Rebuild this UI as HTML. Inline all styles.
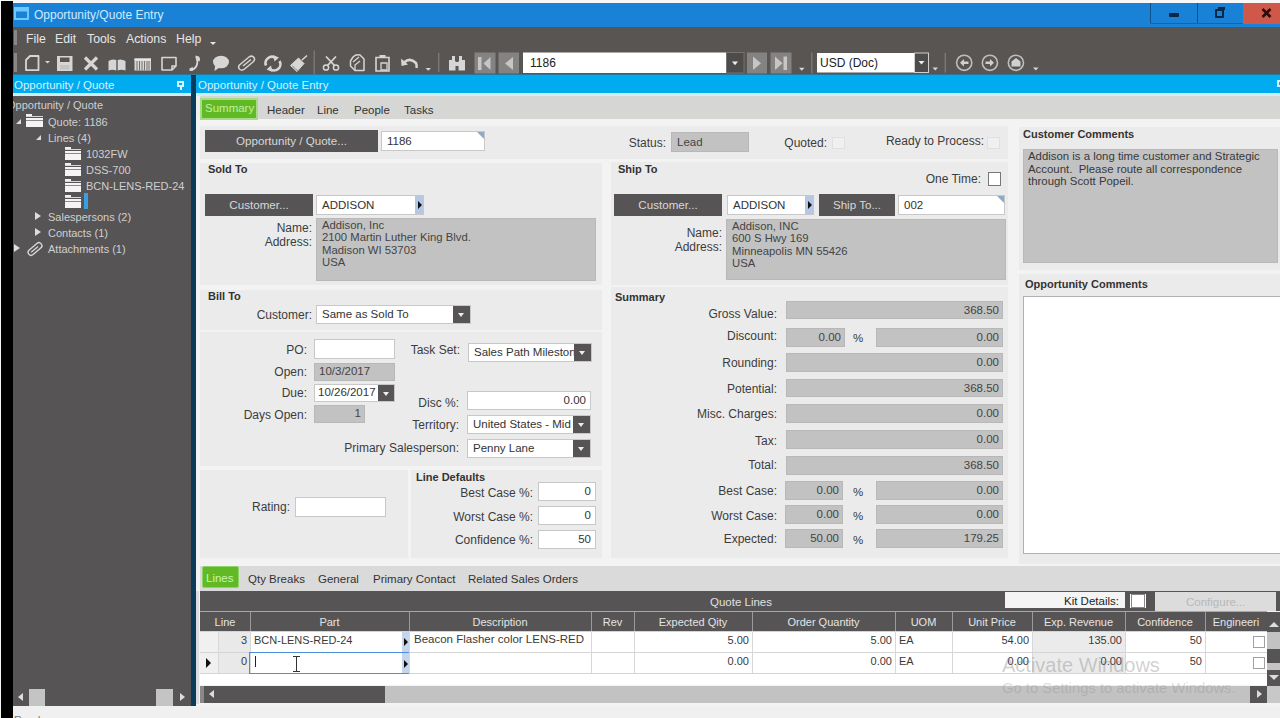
<!DOCTYPE html>
<html><head><meta charset="utf-8">
<style>
*{box-sizing:border-box;margin:0;padding:0}
html,body{width:1280px;height:718px;overflow:hidden}
body{position:relative;background:#f3f3f4;font-family:"Liberation Sans",sans-serif;font-size:12px;color:#3a3a3a}
.a{position:absolute}
.t{position:absolute;white-space:nowrap;line-height:14px}
.lbl{position:absolute;white-space:nowrap;line-height:14px;text-align:right;color:#3c3c3c;font-size:12px}
.grp{position:absolute;background:#ebebeb}
.gt{position:absolute;font-weight:bold;font-size:11px;color:#333;white-space:nowrap}
.btn{position:absolute;background:#575455;color:#d8d8d8;text-align:center;font-size:11.6px;line-height:22px;white-space:nowrap}
.fld{position:absolute;background:#fff;border:1px solid #c8c8c8;font-size:11.5px;line-height:17px;padding-left:5px;white-space:nowrap;overflow:hidden;color:#333}
.ro{position:absolute;background:#c2c2c2;border:1px solid #b8b8b8;font-size:11.5px;line-height:17px;padding:0 3px 0 5px;white-space:nowrap;overflow:hidden;color:#444}
.r{text-align:right}
.dd{position:absolute;right:0;top:0;bottom:0;width:17px;background:#575455}
.dd:after{content:"";position:absolute;left:5px;top:7px;border-left:3.5px solid transparent;border-right:3.5px solid transparent;border-top:4px solid #eee}
.cb{position:absolute;background:#fff;border:1px solid #9a9a9a}
</style></head><body>
<!-- frame -->
<div class="a" style="left:0;top:0;width:1280px;height:3px;background:#f8f8f8"></div>
<div class="a" style="left:1px;top:1px;width:12px;height:717px;background:#000"></div>
<div class="a" style="left:13px;top:3px;width:1267px;height:24px;background:#1a82d6"></div>
<div class="a" style="left:13px;top:27px;width:1267px;height:48px;background:#595553"></div>
<div class="a" style="left:13px;top:74px;width:1267px;height:1px;background:#2f7595"></div>
<!-- left panel -->
<div class="a" style="left:13px;top:75px;width:178px;height:18px;background:#00acef"></div>
<div class="a" style="left:13px;top:93px;width:178px;height:3px;background:#d0edf7"></div>
<div class="a" style="left:13px;top:96px;width:178px;height:610px;background:#575455"></div>
<div class="a" style="left:191px;top:75px;width:5px;height:631px;background:#0b3b5a"></div>
<!-- main header -->
<div class="a" style="left:196px;top:75px;width:1084px;height:18px;background:#00acef"></div>
<div class="a" style="left:196px;top:93px;width:1084px;height:3px;background:#d0edf7"></div>
<div class="a" style="left:196px;top:96px;width:1084px;height:23px;background:#d6d7d4"></div><div class="a" style="left:196px;top:96px;width:4px;height:23px;background:#eef0ee"></div>
<div class="a" style="left:1277px;top:80px;width:4px;height:7px;border:2px solid #d4f2ff;border-right:none"></div>
<div class="a" style="left:196px;top:119px;width:1084px;height:446px;background:#f3f3f4"></div>
<!-- status bar -->
<div class="a" style="left:13px;top:706px;width:1267px;height:12px;background:#f0f0f0"></div>

<!-- tabs -->
<div class="a" style="left:200px;top:98px;width:58px;height:22px;background:#62b926;border:2px solid #a6dc86"></div>
<div class="t" style="left:205px;top:101px;color:#c0f0a4;font-size:11.5px">Summary</div>
<div class="t" style="left:267px;top:103px;color:#333;font-size:11.5px">Header</div>
<div class="t" style="left:317px;top:103px;color:#333;font-size:11.5px">Line</div>
<div class="t" style="left:354px;top:103px;color:#333;font-size:11.5px">People</div>
<div class="t" style="left:404px;top:103px;color:#333;font-size:11.5px">Tasks</div>
<!-- groups -->
<div class="grp" style="left:200px;top:126px;width:808px;height:33px"></div>
<div class="grp" style="left:200px;top:163px;width:402px;height:122px"></div>
<div class="grp" style="left:611px;top:162px;width:397px;height:123px"></div>
<div class="grp" style="left:200px;top:290px;width:402px;height:40px"></div>
<div class="grp" style="left:200px;top:332px;width:402px;height:134px"></div>
<div class="grp" style="left:200px;top:470px;width:208px;height:88px"></div>
<div class="grp" style="left:411px;top:470px;width:191px;height:88px"></div>
<div class="grp" style="left:611px;top:287px;width:397px;height:271px"></div>
<div class="grp" style="left:1019px;top:127px;width:261px;height:143px"></div>
<div class="grp" style="left:1019px;top:274px;width:261px;height:290px"></div>
<!-- top row -->
<div class="btn" style="left:205px;top:130px;width:173px;height:22px">Opportunity / Quote...</div>
<div class="fld" style="left:381px;top:131px;width:104px;height:20px;line-height:18px">1186</div>
<div class="a" style="left:477px;top:132px;width:0;height:0;border-top:7px solid #8fa9c8;border-left:7px solid transparent"></div>
<div class="lbl" style="left:600px;top:136px;width:66px">Status:</div>
<div class="ro" style="left:671px;top:132px;width:78px;height:20px;line-height:18px">Lead</div>
<div class="lbl" style="left:760px;top:136px;width:67px">Quoted:</div>
<div class="cb" style="left:832px;top:137px;width:13px;height:12px;border-color:#e0e0e0;background:#f0f0f0"></div>
<div class="lbl" style="left:860px;top:134px;width:124px">Ready to Process:</div>
<div class="cb" style="left:987px;top:137px;width:13px;height:12px;border-color:#e0e0e0;background:#f0f0f0"></div>
<!-- Sold To -->
<div class="gt" style="left:208px;top:163px">Sold To</div>
<div class="btn" style="left:205px;top:194px;width:108px;height:22px">Customer...</div>
<div class="fld" style="left:316px;top:195px;width:108px;height:20px;line-height:18px">ADDISON</div>
<div class="a" style="left:415px;top:196px;width:8px;height:18px;background:#b4c8e4"></div>
<div class="a" style="left:418px;top:201px;width:0;height:0;border-left:4px solid #111;border-top:4px solid transparent;border-bottom:4px solid transparent"></div>
<div class="lbl" style="left:240px;top:221px;width:72px">Name:</div>
<div class="lbl" style="left:240px;top:235px;width:72px">Address:</div>
<div class="ro" style="left:316px;top:218px;width:280px;height:63px;line-height:12.4px;padding-top:0;font-size:11.3px">Addison, Inc<br>2100 Martin Luther King Blvd.<br>Madison WI 53703<br>USA</div>
<!-- Ship To -->
<div class="gt" style="left:618px;top:163px">Ship To</div>
<div class="lbl" style="left:880px;top:172px;width:101px">One Time:</div>
<div class="cb" style="left:988px;top:172px;width:13px;height:14px;border-color:#777"></div>
<div class="btn" style="left:614px;top:194px;width:108px;height:22px">Customer...</div>
<div class="fld" style="left:727px;top:195px;width:87px;height:20px;line-height:18px">ADDISON</div>
<div class="a" style="left:805px;top:196px;width:8px;height:18px;background:#b4c8e4"></div>
<div class="a" style="left:808px;top:201px;width:0;height:0;border-left:4px solid #111;border-top:4px solid transparent;border-bottom:4px solid transparent"></div>
<div class="btn" style="left:819px;top:194px;width:76px;height:22px">Ship To...</div>
<div class="fld" style="left:898px;top:195px;width:107px;height:20px;line-height:18px">002</div>
<div class="a" style="left:997px;top:196px;width:0;height:0;border-top:7px solid #8fa9c8;border-left:7px solid transparent"></div>
<div class="lbl" style="left:650px;top:226px;width:72px">Name:</div>
<div class="lbl" style="left:650px;top:240px;width:72px">Address:</div>
<div class="ro" style="left:726px;top:219px;width:280px;height:61px;line-height:12.3px;padding-top:0;font-size:11.3px">Addison, INC<br>600 S Hwy 169<br>Minneapolis MN 55426<br>USA</div>
<!-- Bill To -->
<div class="gt" style="left:208px;top:290px">Bill To</div>
<div class="lbl" style="left:230px;top:308px;width:82px">Customer:</div>
<div class="fld" style="left:316px;top:305px;width:155px;height:19px;line-height:16px">Same as Sold To<span class="dd"></span></div>
<!-- middle -->
<div class="lbl" style="left:250px;top:343px;width:57px">PO:</div>
<div class="fld" style="left:314px;top:339px;width:81px;height:20px"></div>
<div class="lbl" style="left:250px;top:365px;width:57px">Open:</div>
<div class="ro" style="left:314px;top:363px;width:81px;height:18px;line-height:15px;padding-left:4px">10/3/2017</div>
<div class="lbl" style="left:250px;top:386px;width:57px">Due:</div>
<div class="fld" style="left:314px;top:384px;width:81px;height:18px;line-height:15px;padding-left:3px">10/26/2017<span class="dd" style="width:16px"></span></div>
<div class="lbl" style="left:220px;top:408px;width:87px">Days Open:</div>
<div class="ro r" style="left:314px;top:405px;width:51px;height:18px;line-height:15px">1</div>
<div class="lbl" style="left:400px;top:343px;width:60px">Task Set:</div>
<div class="fld" style="left:468px;top:343px;width:124px;height:19px;line-height:17px">Sales Path Mileston<span class="dd"></span></div>
<div class="lbl" style="left:400px;top:396px;width:59px">Disc %:</div>
<div class="fld r" style="left:467px;top:391px;width:124px;height:19px;line-height:17px;padding-right:4px">0.00</div>
<div class="lbl" style="left:400px;top:418px;width:59px">Territory:</div>
<div class="fld" style="left:467px;top:415px;width:124px;height:19px;line-height:17px">United States - Mid<span class="dd"></span></div>
<div class="lbl" style="left:320px;top:441px;width:139px">Primary Salesperson:</div>
<div class="fld" style="left:467px;top:439px;width:124px;height:19px;line-height:17px">Penny Lane<span class="dd"></span></div>
<!-- rating / line defaults -->
<div class="lbl" style="left:230px;top:500px;width:60px">Rating:</div>
<div class="fld" style="left:295px;top:497px;width:91px;height:20px"></div>
<div class="gt" style="left:416px;top:471px">Line Defaults</div>
<div class="lbl" style="left:420px;top:486px;width:113px">Best Case %:</div>
<div class="fld r" style="left:538px;top:482px;width:58px;height:19px;line-height:17px;padding-right:4px">0</div>
<div class="lbl" style="left:420px;top:510px;width:113px">Worst Case %:</div>
<div class="fld r" style="left:538px;top:506px;width:58px;height:19px;line-height:17px;padding-right:4px">0</div>
<div class="lbl" style="left:420px;top:533px;width:113px">Confidence %:</div>
<div class="fld r" style="left:538px;top:530px;width:58px;height:19px;line-height:17px;padding-right:4px">50</div>
<!-- summary -->
<div class="gt" style="left:615px;top:291px">Summary</div>
<div class="lbl" style="left:640px;top:307px;width:137px">Gross Value:</div>
<div class="ro r" style="left:786px;top:301px;width:217px;height:18px;line-height:16px">368.50</div>
<div class="lbl" style="left:640px;top:329px;width:137px">Discount:</div>
<div class="ro r" style="left:786px;top:328px;width:59px;height:19px;line-height:17px">0.00</div>
<div class="t" style="left:853px;top:331px;font-size:11.5px">%</div>
<div class="ro r" style="left:876px;top:328px;width:127px;height:19px;line-height:17px">0.00</div>
<div class="lbl" style="left:640px;top:356px;width:137px">Rounding:</div>
<div class="ro r" style="left:786px;top:353px;width:217px;height:19px;line-height:17px">0.00</div>
<div class="lbl" style="left:640px;top:382px;width:137px">Potential:</div>
<div class="ro r" style="left:786px;top:379px;width:217px;height:18px;line-height:16px">368.50</div>
<div class="lbl" style="left:640px;top:407px;width:137px">Misc. Charges:</div>
<div class="ro r" style="left:786px;top:404px;width:217px;height:19px;line-height:17px">0.00</div>
<div class="lbl" style="left:640px;top:434px;width:137px">Tax:</div>
<div class="ro r" style="left:786px;top:430px;width:217px;height:19px;line-height:17px">0.00</div>
<div class="lbl" style="left:640px;top:458px;width:137px">Total:</div>
<div class="ro r" style="left:786px;top:456px;width:217px;height:19px;line-height:17px">368.50</div>
<div class="lbl" style="left:640px;top:484px;width:137px">Best Case:</div>
<div class="ro r" style="left:785px;top:481px;width:58px;height:19px;line-height:17px">0.00</div>
<div class="t" style="left:853px;top:485px;font-size:11.5px">%</div>
<div class="ro r" style="left:876px;top:481px;width:127px;height:19px;line-height:17px">0.00</div>
<div class="lbl" style="left:640px;top:509px;width:137px">Worst Case:</div>
<div class="ro r" style="left:785px;top:505px;width:58px;height:19px;line-height:17px">0.00</div>
<div class="t" style="left:853px;top:509px;font-size:11.5px">%</div>
<div class="ro r" style="left:876px;top:505px;width:127px;height:19px;line-height:17px">0.00</div>
<div class="lbl" style="left:640px;top:532px;width:137px">Expected:</div>
<div class="ro r" style="left:785px;top:529px;width:58px;height:19px;line-height:17px">50.00</div>
<div class="t" style="left:853px;top:533px;font-size:11.5px">%</div>
<div class="ro r" style="left:876px;top:529px;width:127px;height:19px;line-height:17px">179.25</div>
<!-- comments -->
<div class="gt" style="left:1023px;top:128px">Customer Comments</div>
<div class="ro" style="left:1023px;top:149px;width:255px;height:114px;font-size:11.4px;line-height:12.5px;padding:0 4px;white-space:normal;color:#383838">Addison is a long time customer and Strategic Account.&nbsp; Please route all correspondence through Scott Popeil.</div>
<div class="gt" style="left:1025px;top:278px">Opportunity Comments</div>
<div class="a" style="left:1023px;top:296px;width:257px;height:258px;background:#fff;border:1px solid #b0b0b0;border-right:none"></div>

<!-- grid section -->
<div class="a" style="left:200px;top:566px;width:1080px;height:25px;background:#dadada"></div>
<div class="a" style="left:202px;top:566px;width:37px;height:22px;background:#62b926;border:1px solid #8fd46a;border-radius:2px"></div>
<div class="t" style="left:206px;top:571px;color:#c9f5b0;font-size:11.5px">Lines</div>
<div class="t" style="left:248px;top:572px;font-size:11.5px;color:#333">Qty Breaks</div>
<div class="t" style="left:318px;top:572px;font-size:11.5px;color:#333">General</div>
<div class="t" style="left:373px;top:572px;font-size:11.5px;color:#333">Primary Contact</div>
<div class="t" style="left:468px;top:572px;font-size:11.5px;color:#333">Related Sales Orders</div>
<div class="a" style="left:200px;top:591px;width:1080px;height:20px;background:#575455"></div>
<div class="t" style="left:710px;top:595px;font-size:11.5px;color:#e0e0e0">Quote Lines</div>
<div class="a" style="left:1005px;top:592px;width:120px;height:16px;background:#f4f4f4"></div>
<div class="t" style="left:1064px;top:594px;font-size:11.5px;color:#222">Kit Details:</div>
<div class="a" style="left:1128px;top:592px;width:20px;height:18px;background:#fff;border:2px solid #575455"></div>
<div class="a" style="left:1131px;top:594px;width:14px;height:14px;border:1px solid #888;background:#fff"></div>
<div class="a" style="left:1155px;top:592px;width:121px;height:19px;background:#dcdcdc"></div>
<div class="t" style="left:1186px;top:595px;font-size:11.5px;color:#b8b8b8">Configure...</div>
<div class="a" style="left:200px;top:611px;width:1067px;height:1px;background:#a8a8a8"></div>
<div class="a" style="left:200px;top:612px;width:1067px;height:19px;background:#575455"></div>
<div class="t" style="left:200px;top:615px;width:50px;text-align:center;font-size:11px;color:#e4e4e4">Line</div>
<div class="a" style="left:250px;top:612px;width:1px;height:19px;background:#9a9a9a"></div>
<div class="t" style="left:250px;top:615px;width:159px;text-align:center;font-size:11px;color:#e4e4e4">Part</div>
<div class="a" style="left:409px;top:612px;width:1px;height:19px;background:#9a9a9a"></div>
<div class="t" style="left:409px;top:615px;width:182px;text-align:center;font-size:11px;color:#e4e4e4">Description</div>
<div class="a" style="left:591px;top:612px;width:1px;height:19px;background:#9a9a9a"></div>
<div class="t" style="left:591px;top:615px;width:43px;text-align:center;font-size:11px;color:#e4e4e4">Rev</div>
<div class="a" style="left:634px;top:612px;width:1px;height:19px;background:#9a9a9a"></div>
<div class="t" style="left:634px;top:615px;width:118px;text-align:center;font-size:11px;color:#e4e4e4">Expected Qity</div>
<div class="a" style="left:752px;top:612px;width:1px;height:19px;background:#9a9a9a"></div>
<div class="t" style="left:752px;top:615px;width:143px;text-align:center;font-size:11px;color:#e4e4e4">Order Quantity</div>
<div class="a" style="left:895px;top:612px;width:1px;height:19px;background:#9a9a9a"></div>
<div class="t" style="left:895px;top:615px;width:57px;text-align:center;font-size:11px;color:#e4e4e4">UOM</div>
<div class="a" style="left:952px;top:612px;width:1px;height:19px;background:#9a9a9a"></div>
<div class="t" style="left:952px;top:615px;width:80px;text-align:center;font-size:11px;color:#e4e4e4">Unit Price</div>
<div class="a" style="left:1032px;top:612px;width:1px;height:19px;background:#9a9a9a"></div>
<div class="t" style="left:1032px;top:615px;width:93px;text-align:center;font-size:11px;color:#e4e4e4">Exp. Revenue</div>
<div class="a" style="left:1125px;top:612px;width:1px;height:19px;background:#9a9a9a"></div>
<div class="t" style="left:1125px;top:615px;width:80px;text-align:center;font-size:11px;color:#e4e4e4">Confidence</div>
<div class="a" style="left:1205px;top:612px;width:1px;height:19px;background:#9a9a9a"></div>
<div class="t" style="left:1205px;top:615px;width:62px;text-align:center;font-size:11px;color:#e4e4e4">Engineeri</div>
<div class="a" style="left:1267px;top:612px;width:1px;height:19px;background:#9a9a9a"></div>
<div class="a" style="left:200px;top:631px;width:1067px;height:54px;background:#fff"></div>
<div class="a" style="left:200px;top:631px;width:18px;height:42px;background:#f0f0f0"></div>
<div class="a" style="left:218px;top:631px;width:32px;height:42px;background:#e9e9e9"></div>
<div class="a" style="left:1032px;top:631px;width:93px;height:42px;background:#ebebeb"></div>
<div class="a" style="left:200px;top:631px;width:1067px;height:1px;background:#d4d4d4"></div>
<div class="a" style="left:200px;top:652px;width:1067px;height:1px;background:#d4d4d4"></div>
<div class="a" style="left:200px;top:673px;width:1067px;height:1px;background:#d4d4d4"></div>
<div class="a" style="left:218px;top:631px;width:1px;height:42px;background:#d8d8d8"></div>
<div class="a" style="left:250px;top:631px;width:1px;height:42px;background:#d8d8d8"></div>
<div class="a" style="left:409px;top:631px;width:1px;height:42px;background:#d8d8d8"></div>
<div class="a" style="left:591px;top:631px;width:1px;height:42px;background:#d8d8d8"></div>
<div class="a" style="left:634px;top:631px;width:1px;height:42px;background:#d8d8d8"></div>
<div class="a" style="left:752px;top:631px;width:1px;height:42px;background:#d8d8d8"></div>
<div class="a" style="left:895px;top:631px;width:1px;height:42px;background:#d8d8d8"></div>
<div class="a" style="left:952px;top:631px;width:1px;height:42px;background:#d8d8d8"></div>
<div class="a" style="left:1032px;top:631px;width:1px;height:42px;background:#d8d8d8"></div>
<div class="a" style="left:1125px;top:631px;width:1px;height:42px;background:#d8d8d8"></div>
<div class="a" style="left:1205px;top:631px;width:1px;height:42px;background:#d8d8d8"></div>
<div class="a" style="left:1267px;top:631px;width:1px;height:42px;background:#d8d8d8"></div>
<div class="t r" style="left:218px;top:630px;width:29px;font-size:11px;line-height:20px">3</div>
<div class="t" style="left:254px;top:630px;font-size:11px;line-height:20px">BCN-LENS-RED-24</div>
<div class="t" style="left:414px;top:630px;font-size:11.5px;line-height:18px">Beacon Flasher color LENS-RED</div>
<div class="t r" style="left:634px;top:630px;width:115px;font-size:11px;line-height:20px">5.00</div>
<div class="t r" style="left:752px;top:630px;width:140px;font-size:11px;line-height:20px">5.00</div>
<div class="t" style="left:899px;top:630px;font-size:11px;line-height:20px">EA</div>
<div class="t r" style="left:952px;top:630px;width:77px;font-size:11px;line-height:20px">54.00</div>
<div class="t r" style="left:1032px;top:630px;width:90px;font-size:11px;line-height:20px">135.00</div>
<div class="t r" style="left:1125px;top:630px;width:77px;font-size:11px;line-height:20px">50</div>
<div class="a" style="left:1253px;top:636px;width:12px;height:12px;border:1px solid #a0a0a0;background:#fff"></div>
<div class="t r" style="left:218px;top:651px;width:29px;font-size:11px;line-height:20px">0</div>
<div class="t" style="left:254px;top:651px;font-size:11px;line-height:20px"></div>
<div class="t" style="left:414px;top:651px;font-size:11px;line-height:18px"></div>
<div class="t r" style="left:634px;top:651px;width:115px;font-size:11px;line-height:20px">0.00</div>
<div class="t r" style="left:752px;top:651px;width:140px;font-size:11px;line-height:20px">0.00</div>
<div class="t" style="left:899px;top:651px;font-size:11px;line-height:20px">EA</div>
<div class="t r" style="left:952px;top:651px;width:77px;font-size:11px;line-height:20px">0.00</div>
<div class="t r" style="left:1032px;top:651px;width:90px;font-size:11px;line-height:20px">0.00</div>
<div class="t r" style="left:1125px;top:651px;width:77px;font-size:11px;line-height:20px">50</div>
<div class="a" style="left:1253px;top:657px;width:12px;height:12px;border:1px solid #a0a0a0;background:#fff"></div>
<div class="a" style="left:402px;top:632px;width:7px;height:20px;background:#c6d6ea"></div>
<div class="a" style="left:404px;top:638px;border-left:4px solid #111;border-top:4px solid transparent;border-bottom:4px solid transparent"></div>
<div class="a" style="left:249px;top:652px;width:160px;height:22px;border:1px solid #4a90d9"></div>
<div class="a" style="left:402px;top:653px;width:7px;height:20px;background:#c6d6ea"></div>
<div class="a" style="left:404px;top:660px;border-left:4px solid #111;border-top:4px solid transparent;border-bottom:4px solid transparent"></div>
<div class="a" style="left:255px;top:656px;width:1px;height:11px;background:#222"></div>
<div class="a" style="left:296px;top:656px;width:1px;height:16px;background:#333"></div><div class="a" style="left:293px;top:656px;width:7px;height:1px;background:#333"></div><div class="a" style="left:293px;top:671px;width:7px;height:1px;background:#333"></div>
<div class="a" style="left:206px;top:658px;border-left:5px solid #111;border-top:5px solid transparent;border-bottom:5px solid transparent"></div>
<div class="a" style="left:200px;top:686px;width:1067px;height:17px;background:#c2c2c2"></div>
<div class="a" style="left:200px;top:686px;width:185px;height:17px;background:#575455"></div>
<div class="a" style="left:200px;top:686px;width:4px;height:17px;background:#8a8888"></div><div class="a" style="left:196px;top:591px;width:3px;height:113px;background:#dcdcdc"></div>
<div class="a" style="left:209px;top:690px;border-right:5px solid #ddd;border-top:4px solid transparent;border-bottom:4px solid transparent"></div>
<div class="a" style="left:1250px;top:686px;width:17px;height:17px;background:#575455"></div>
<div class="a" style="left:1257px;top:690px;border-left:5px solid #ddd;border-top:4px solid transparent;border-bottom:4px solid transparent"></div>
<div class="a" style="left:1267px;top:612px;width:13px;height:74px;background:#575455"></div>
<div class="a" style="left:1267px;top:632px;width:13px;height:17px;background:#c2c2c2"></div>
<div class="a" style="left:1267px;top:663px;width:13px;height:7px;background:#c4c4c4"></div>
<div class="a" style="left:1267px;top:686px;width:13px;height:17px;background:#c8c8c8"></div>
<div class="a" style="left:1269px;top:622px;border-bottom:5px solid #ddd;border-left:5px solid transparent;border-right:5px solid transparent"></div>
<div class="a" style="left:1269px;top:675px;border-top:5px solid #ddd;border-left:5px solid transparent;border-right:5px solid transparent"></div>
<div class="t" style="left:1002px;top:653px;font-size:20px;line-height:24px;color:rgba(120,120,120,0.35)">Activate Windows</div>
<div class="t" style="left:1002px;top:680px;font-size:14.8px;line-height:16px;color:rgba(120,120,120,0.25)">Go to Settings to activate Windows.</div>

<!-- title bar -->
<svg class="a" style="left:14px;top:7px" width="16" height="14" viewBox="0 0 16 14"><rect x="1" y="1" width="13" height="11" fill="none" stroke="#6cc8ff" stroke-width="2"/><rect x="3" y="5" width="9" height="3" fill="#1a82d6"/><rect x="2" y="2" width="11" height="2.5" fill="#6cc8ff"/></svg>
<div class="t" style="left:34px;top:8px;color:#cdeaff;font-size:12px">Opportunity/Quote Entry</div>
<div class="a" style="left:1150px;top:3px;width:1px;height:21px;background:#12508a"></div>
<div class="a" style="left:1197px;top:3px;width:1px;height:21px;background:#12508a"></div>
<div class="a" style="left:1150px;top:23px;width:93px;height:1px;background:#1664ac"></div>
<div class="a" style="left:1169px;top:13px;width:10px;height:4px;background:#0a2844;border-radius:1px"></div>
<div class="a" style="left:1215px;top:9px;width:9px;height:9px;border:2.5px solid #0a2844;border-radius:1px"></div>
<div class="a" style="left:1218px;top:7px;width:7px;height:3px;background:#0a2844"></div>
<div class="a" style="left:1243px;top:3px;width:37px;height:21px;background:#d0584a"></div>
<svg class="a" style="left:1261px;top:8px" width="11" height="10" viewBox="0 0 11 10"><path d="M1.5 1 L9.5 9 M9.5 1 L1.5 9" stroke="#2a0c0c" stroke-width="2.6"/></svg>
<!-- menu -->
<div class="a" style="left:14px;top:30px;width:3px;height:15px;background:#8a8686"></div>
<div class="t" style="left:26px;top:32px;color:#e6e6e6;font-size:12.3px">File</div>
<div class="t" style="left:55px;top:32px;color:#e6e6e6;font-size:12.3px">Edit</div>
<div class="t" style="left:87px;top:32px;color:#e6e6e6;font-size:12.3px">Tools</div>
<div class="t" style="left:126px;top:32px;color:#e6e6e6;font-size:12.3px">Actions</div>
<div class="t" style="left:176px;top:32px;color:#e6e6e6;font-size:12.3px">Help</div>
<div class="a" style="left:210px;top:42px;border-top:3px solid #e6e6e6;border-left:3px solid transparent;border-right:3px solid transparent"></div>
<!-- left panel -->
<div class="t" style="left:14px;top:78px;color:#d4f2ff;font-size:11.5px">Opportunity / Quote</div>
<div class="a" style="left:177px;top:81px;width:7px;height:6px;border:2px solid #d4f2ff"></div>
<div class="a" style="left:180px;top:87px;width:1.5px;height:3px;background:#d4f2ff"></div>
<div class="t" style="left:7px;top:98px;color:#cfcfcf;font-size:11px">Opportunity / Quote</div>
<div class="a" style="left:1px;top:96px;width:12px;height:20px;background:#000"></div>
<div class="a" style="left:16px;top:119px;border-bottom:5px solid #ddd;border-left:5px solid transparent"></div>
<div class="t" style="left:48px;top:115px;color:#cfcfcf;font-size:11px">Quote: 1186</div>
<div class="a" style="left:36px;top:135px;border-bottom:5px solid #ddd;border-left:5px solid transparent"></div>
<div class="t" style="left:48px;top:131px;color:#cfcfcf;font-size:11px">Lines (4)</div>
<div class="t" style="left:86px;top:147px;color:#cfcfcf;font-size:11px">1032FW</div>
<div class="t" style="left:86px;top:163px;color:#cfcfcf;font-size:11px">DSS-700</div>
<div class="t" style="left:86px;top:179px;color:#cfcfcf;font-size:11px">BCN-LENS-RED-24</div>
<div class="a" style="left:84px;top:193px;width:4px;height:16px;background:#3a9ee0"></div>
<div class="a" style="left:35px;top:212px;border-left:6px solid #ddd;border-top:4.5px solid transparent;border-bottom:4.5px solid transparent"></div>
<div class="t" style="left:48px;top:210px;color:#cfcfcf;font-size:11px">Salespersons (2)</div>
<div class="a" style="left:35px;top:228px;border-left:6px solid #ddd;border-top:4.5px solid transparent;border-bottom:4.5px solid transparent"></div>
<div class="t" style="left:48px;top:226px;color:#cfcfcf;font-size:11px">Contacts (1)</div>
<div class="a" style="left:14px;top:244px;border-left:6px solid #ddd;border-top:4.5px solid transparent;border-bottom:4.5px solid transparent"></div>
<svg class="a" style="left:26px;top:241px" width="18" height="16" viewBox="0 0 18 16"><g transform="rotate(-40 9 8)"><rect x="1" y="5" width="16" height="6" rx="3" fill="none" stroke="#d8d8d8" stroke-width="1.4"/><path d="M4 8 H13" stroke="#d8d8d8" stroke-width="1.2"/></g></svg>
<div class="t" style="left:48px;top:242px;color:#cfcfcf;font-size:11px">Attachments (1)</div>
<!-- left bottom scrollbar -->
<div class="a" style="left:13px;top:689px;width:178px;height:17px;background:#575455"></div>
<div class="a" style="left:18px;top:693px;border-right:5px solid #ddd;border-top:4px solid transparent;border-bottom:4px solid transparent"></div>
<div class="a" style="left:29px;top:689px;width:16px;height:17px;background:#c4c4c4"></div>
<div class="a" style="left:156px;top:689px;width:17px;height:17px;background:#c4c4c4"></div>
<div class="a" style="left:180px;top:693px;border-left:5px solid #ddd;border-top:4px solid transparent;border-bottom:4px solid transparent"></div>
<div class="t" style="left:14px;top:713px;color:#777;font-size:11px">Ready</div>
<!-- main header -->
<div class="t" style="left:198px;top:78px;color:#d4f2ff;font-size:11.5px">Opportunity / Quote Entry</div>
<div class="a" style="left:26px;top:114px;width:6px;height:2px;background:#f0f0f0"></div><div class="a" style="left:26px;top:116px;width:17px;height:1px;background:#d8d8d8"></div><div class="a" style="left:26px;top:118px;width:17px;height:9px;background:#f4f4f4"></div><div class="a" style="left:26px;top:120px;width:17px;height:1px;background:#8a8888"></div>
<div class="a" style="left:65px;top:147px;width:6px;height:2px;background:#f0f0f0"></div><div class="a" style="left:65px;top:149px;width:16px;height:1px;background:#d8d8d8"></div><div class="a" style="left:65px;top:151px;width:16px;height:9px;background:#f4f4f4"></div><div class="a" style="left:65px;top:153px;width:16px;height:1px;background:#8a8888"></div>
<div class="a" style="left:65px;top:163px;width:6px;height:2px;background:#f0f0f0"></div><div class="a" style="left:65px;top:165px;width:16px;height:1px;background:#d8d8d8"></div><div class="a" style="left:65px;top:167px;width:16px;height:9px;background:#f4f4f4"></div><div class="a" style="left:65px;top:169px;width:16px;height:1px;background:#8a8888"></div>
<div class="a" style="left:65px;top:179px;width:6px;height:2px;background:#f0f0f0"></div><div class="a" style="left:65px;top:181px;width:16px;height:1px;background:#d8d8d8"></div><div class="a" style="left:65px;top:183px;width:16px;height:9px;background:#f4f4f4"></div><div class="a" style="left:65px;top:185px;width:16px;height:1px;background:#8a8888"></div>
<div class="a" style="left:65px;top:195px;width:6px;height:2px;background:#f0f0f0"></div><div class="a" style="left:65px;top:197px;width:16px;height:1px;background:#d8d8d8"></div><div class="a" style="left:65px;top:199px;width:16px;height:9px;background:#f4f4f4"></div><div class="a" style="left:65px;top:201px;width:16px;height:1px;background:#8a8888"></div>
<!-- toolbar -->
<div class="a" style="left:14px;top:53px;width:3px;height:19px;background:#8a8686"></div>
<svg class="a" style="left:0;top:48px" width="1280" height="27" viewBox="0 48 1280 27">
<g fill="none" stroke="#d6d6d6" stroke-width="1.8" stroke-linejoin="round">
<!-- new doc -->
<path d="M30 56 H38.5 V70.2 H26 V60 Z"/>
</g>
<path d="M45 61 h5 l-2.5 2.5z" fill="#d6d6d6"/>
<!-- save -->
<path d="M57 56 H72.5 V71 H57 Z M60 57.5 V62 H69.5 V57.5 Z" fill="#d6d6d6" fill-rule="evenodd"/><rect x="60" y="65" width="9.5" height="4.5" fill="#c4c4c4"/>
<!-- X -->
<path d="M85 57.5 L97 69.5 M97 57.5 L85 69.5" stroke="#d6d6d6" stroke-width="3.2"/>
<!-- book -->
<path d="M108.5 61 Q112 58.5 116.3 60 V70.5 Q112 69 108.5 70.5Z M117.7 60 Q121 58.5 125.5 61 V70.5 Q121 69 117.7 70.5Z" fill="#d6d6d6"/>
<!-- grid -->
<rect x="134.5" y="58.5" width="16.5" height="12" fill="#d6d6d6"/>
<path d="M137 61 V70 M139.5 61 V70 M142 61 V70 M144.5 61 V70 M147 61 V70 M149 61 V70" stroke="#6a6666" stroke-width="0.9"/>
<rect x="134.5" y="58.5" width="16.5" height="2" fill="#e8e8e8"/>
<!-- note -->
<path d="M162 57.5 H176 V66 L172 70 H162 Z M176 66 H172 V70" fill="none" stroke="#d6d6d6" stroke-width="1.6" stroke-linejoin="round"/>
<!-- phone -->
<path d="M196 56.5 Q198.5 61 196.5 66 Q194.5 69.5 191 70" fill="none" stroke="#d6d6d6" stroke-width="1.8"/><path d="M195.5 55.5 L199 56.5 Q201 59 199.5 61.5 L196.5 60.5Z M189.5 68.5 L192.5 67 L194 69.5 Q192 71.5 189.5 71Z" fill="#d6d6d6"/>
<!-- speech -->
<ellipse cx="221" cy="62" rx="8" ry="6.3" fill="#d6d6d6"/>
<path d="M215 66 L214.5 71 L219.5 67.5Z" fill="#d6d6d6"/>
<!-- paperclip -->
<path d="M240 69.5 Q237.5 67.5 239.5 65 L249 57 Q252 55 254 57.5 Q255.5 60 253 62 L244.5 69 Q242 71 240 69.5 Z M243 66 L251 59.5" fill="none" stroke="#d6d6d6" stroke-width="1.5"/>
<!-- refresh -->
<path d="M275.5 58 A6.3 6.3 0 0 0 266 65.5 M270 69 A6.3 6.3 0 0 0 279.5 61" fill="none" stroke="#d6d6d6" stroke-width="2.6"/>
<path d="M273 55 L279 57.5 L274.5 61.5Z M272.5 72 L266.5 69.5 L271 65.5Z" fill="#d6d6d6"/>
<!-- broom -->
<path d="M302 60 L307 55.5" stroke="#d6d6d6" stroke-width="1.6"/>
<path d="M298.5 58 L304 63.5 L297 71.5 L290.5 65.5 Z" fill="#d6d6d6" stroke="#d6d6d6" stroke-width="1" stroke-linejoin="round"/><path d="M292.5 66 L297.5 70.5" stroke="#6a6666" stroke-width="1"/>
<path d="M294 66 L297 69" stroke="#d6d6d6" stroke-width="1.6"/>
<!-- sep -->
<rect x="313.5" y="50.5" width="1.5" height="24" fill="#777"/>
<!-- scissors -->
<circle cx="326" cy="67.5" r="2.6" fill="none" stroke="#d6d6d6" stroke-width="1.5"/>
<circle cx="336" cy="67.5" r="2.6" fill="none" stroke="#d6d6d6" stroke-width="1.5"/>
<path d="M327.5 65.5 L336 56.5 M334.5 65.5 L326 56.5" stroke="#d6d6d6" stroke-width="1.8"/>
<!-- copy -->
<path d="M353 57 Q356 54 360 55 L364 59 V70.5 H355 L350.5 66 V61 Z" fill="none" stroke="#d6d6d6" stroke-width="1.5" stroke-linejoin="round"/>
<path d="M353 62 L359 57 M355 70.5 V65 L360 61" fill="none" stroke="#d6d6d6" stroke-width="1.3"/>
<!-- paste -->
<path d="M376 57.5 H389 V71 H376 Z" fill="none" stroke="#d6d6d6" stroke-width="1.6"/>
<rect x="379.5" y="55" width="6" height="3" fill="#d6d6d6"/>
<path d="M381 63 H387 V70 H381 Z" fill="none" stroke="#d6d6d6" stroke-width="1.3"/>
<!-- undo -->
<path d="M404 62.5 Q410 57 416 63 Q417 65 416.5 68" fill="none" stroke="#d6d6d6" stroke-width="2.5"/>
<path d="M401 58.5 L401.5 66 L408 64.5Z" fill="#d6d6d6"/>
<path d="M425.5 68 h5.5 l-2.75 2.7z" fill="#d6d6d6"/>
<rect x="438" y="53" width="1.5" height="19" fill="#777"/>
<!-- binoculars -->
<path d="M449 62 H455 V56 H452 V60 H449 Z M459 56 V62 H465 V60 H462 V56 Z" fill="#d6d6d6"/>
<rect x="449" y="61" width="6.5" height="9.5" fill="#d6d6d6"/>
<rect x="458.5" y="61" width="6.5" height="9.5" fill="#d6d6d6"/>
<rect x="455" y="62" width="4" height="4" fill="#d6d6d6"/>
<!-- nav buttons -->
<rect x="474.5" y="52.5" width="21" height="21" fill="#858282"/>
<rect x="478" y="57" width="3.5" height="13" fill="#c6c6c6"/>
<path d="M490.5 57 V70 L483.5 63.5Z" fill="#c6c6c6"/>
<rect x="498.5" y="52.5" width="20.5" height="21" fill="#858282"/>
<path d="M513 57 V70 L505 63.5Z" fill="#c6c6c6"/>
<rect x="523" y="52.5" width="203" height="20.5" fill="#fff"/>
<rect x="726.5" y="52.5" width="17.5" height="20.5" fill="#4e4b4b" stroke="#757272" stroke-width="1"/>
<path d="M732 61.5 h6 l-3 3.7z" fill="#eee"/>
<rect x="747" y="52.5" width="20" height="21" fill="#858282"/>
<path d="M753 56.5 V70 L761 63.3Z" fill="#c6c6c6"/>
<rect x="770.5" y="52.5" width="21" height="21" fill="#858282"/>
<path d="M775 56.5 V70 L782.5 63.3Z" fill="#c6c6c6"/>
<rect x="783.5" y="56.5" width="3.5" height="13.5" fill="#c6c6c6"/>
<path d="M799 67.8 h5.5 l-2.75 3z" fill="#d6d6d6"/>
<rect x="811" y="52.5" width="1.5" height="21" fill="#777"/>
<rect x="817" y="53" width="98" height="19.5" fill="#fff"/>
<rect x="914.5" y="53" width="14" height="19.5" fill="#4e4b4b" stroke="#cfcfcf" stroke-width="1"/>
<path d="M918.5 61 h6 l-3 3.6z" fill="#eee"/>
<path d="M932.5 67.5 h5.5 l-2.75 3z" fill="#d6d6d6"/>
<rect x="944.5" y="53" width="1.5" height="19.5" fill="#777"/>
<g fill="none" stroke="#bdbdbd" stroke-width="1.6">
<circle cx="964.2" cy="62.8" r="7.6"/><circle cx="989.9" cy="62.8" r="7.6"/><circle cx="1015.9" cy="62.8" r="7.6"/>
</g>
<path d="M960 62.8 L964 59 V61.5 H968.5 V64 H964 V66.5Z" fill="#d0d0d0"/>
<path d="M994 62.8 L990 59 V61.5 H985.5 V64 H990 V66.5Z" fill="#d0d0d0"/>
<path d="M1011.5 66.5 V61.5 L1016 58 L1020.5 61.5 V66.5Z" fill="#d0d0d0"/>
<path d="M1033 67.5 h5.5 l-2.75 3z" fill="#d6d6d6"/>
</svg>
<div class="t" style="left:530px;top:56px;font-size:12px;color:#222">1186</div>
<div class="t" style="left:820px;top:56px;font-size:12px;color:#222">USD (Doc)</div>
</body></html>
